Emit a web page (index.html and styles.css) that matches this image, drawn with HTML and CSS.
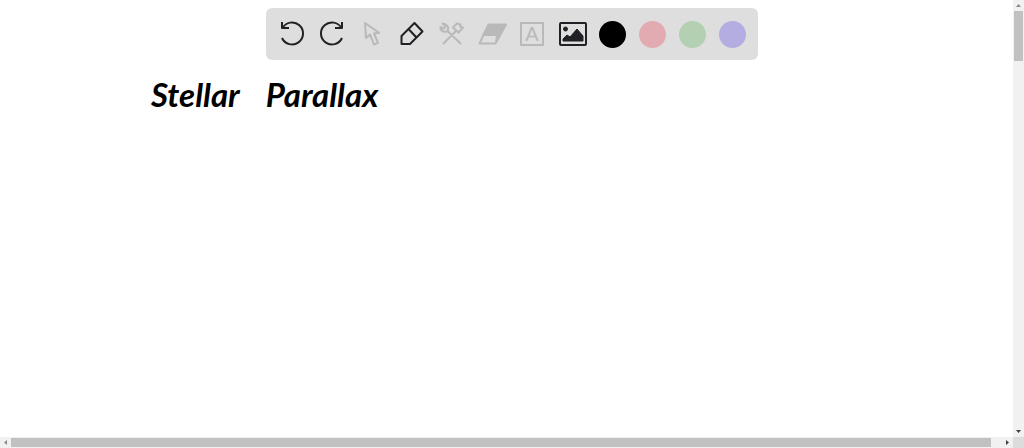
FILE: index.html
```
<!DOCTYPE html>
<html lang="en">
<head>
  <meta charset="utf-8">
  <title>Whiteboard</title>
  <link rel="stylesheet" href="styles.css">
</head>
<body>
  <div class="toolbar-wrap">
    <div class="toolbar" role="toolbar" aria-label="Drawing tools">
      <button class="tool" aria-label="Undo">
        <svg viewBox="0 0 40 52"><path d="M10 14v6h7M10.500 20A11 11 0 1 1 10 30"/></svg>
      </button>
      <button class="tool" aria-label="Redo">
        <svg viewBox="0 0 40 52"><path d="M30 14v6h-7M29.500 20A11 11 0 1 0 30 30"/></svg>
      </button>
      <button class="tool muted" aria-label="Select">
        <svg viewBox="0 0 40 52"><path d="M13 15l1 15 4-3.500 4 10 4-1.700-4-9.300 5-.7z"/></svg>
      </button>
      <button class="tool" aria-label="Pen">
        <svg viewBox="0 0 40 52"><path d="M9.500 36v-8L22.500 15l8 8.500L18 36zM16.500 21l8 8.500"/></svg>
      </button>
      <button class="tool muted" aria-label="Tools">
        <svg viewBox="0 0 40 52"><path d="M8.500 18.500c-.5 4 3 6.500 7 4.500L29 36M15.500 23c2-4-1-7.500-5-7.500l3 3-2 2.500-3-2.500M11 36l13-13M21 19.500l4-4 3.500 1-.5 2 3 1-4.500 5z"/></svg>
      </button>
      <button class="tool muted" aria-label="Eraser">
        <svg viewBox="0 0 40 52"><path d="M16.500 16.500H34L23.500 35.500H7.500z"/><path class="solid" d="M16.500 16.500H34L23.500 35.500l1-8H10.500z"/></svg>
      </button>
      <button class="tool muted" aria-label="Text">
        <svg viewBox="0 0 40 52"><rect x="9" y="15" width="22" height="22"/><text class="letter" x="20" y="33">A</text></svg>
      </button>
      <button class="tool" aria-label="Image">
        <svg viewBox="0 0 40 52"><rect x="8" y="15" width="26" height="22" rx="1"/><circle class="solid" cx="13.500" cy="21" r="2"/><path class="solid" d="M11 33v-2l4-4 3 2 7-8 6 7v5z"/></svg>
      </button>
      <input class="swatch black" type="radio" name="color" aria-label="Black" checked>
      <input class="swatch red" type="radio" name="color" aria-label="Red">
      <input class="swatch green" type="radio" name="color" aria-label="Green">
      <input class="swatch purple" type="radio" name="color" aria-label="Purple">
    </div>
  </div>

  <main class="board">
    <h1 class="ink"><span>Stellar</span> <span>Parallax</span></h1>
  </main>

  <div class="scrollbar vertical">
    <button class="arrow" aria-label="Scroll up"><svg viewBox="0 0 11 11"><path d="M3 7h5L5.500 4z"/></svg></button>
    <div class="thumb"></div>
    <button class="arrow end" aria-label="Scroll down"><svg viewBox="0 0 11 11"><path d="M3 4h5L5.500 7z"/></svg></button>
  </div>

  <div class="scrollbar horizontal">
    <button class="arrow" aria-label="Scroll left"><svg viewBox="0 0 11 11"><path d="M7 3v5L4 5.500z"/></svg></button>
    <div class="thumb"></div>
    <button class="arrow end" aria-label="Scroll right"><svg viewBox="0 0 11 11"><path d="M4 3v5l3-2.500z"/></svg></button>
  </div>
  <div class="corner"></div>
</body>
</html>
```
FILE: styles.css
```
* {
  box-sizing: border-box;
}

body {
  margin: 0;
  height: 100vh;
  display: grid;
  grid-template-columns: 1fr 11px;
  grid-template-rows: 1fr 11px;
  background: #fff;
  font-family: Lato, sans-serif;
  overflow: hidden;
}

/* Toolbar floats over the board */
.toolbar-wrap {
  position: absolute;
  top: 8px;
  left: 0;
  right: 0;
  display: flex;
  justify-content: center;
  pointer-events: none;
}

.toolbar {
  display: flex;
  align-items: center;
  padding: 0 6px;
  background: #dedede;
  border-radius: 6px;
  pointer-events: auto;
}

.tool {
  width: 40px;
  height: 52px;
  padding: 0;
  border: none;
  background: none;
  color: #202124;
  cursor: pointer;
}

.tool.muted {
  color: #b9b9b9;
}

.tool svg {
  display: block;
  width: 100%;
  height: 100%;
  fill: none;
  stroke: currentColor;
  stroke-width: 2;
  stroke-linejoin: round;
}

.tool .solid {
  fill: currentColor;
  stroke-width: 1;
}

.tool .letter {
  font-size: 20px;
  text-anchor: middle;
  fill: currentColor;
  stroke: none;
}

.swatch {
  appearance: none;
  width: 27px;
  height: 27px;
  margin: 0 6px 0 7px;
  border-radius: 50%;
  cursor: pointer;
}

.black { background: #000; }
.red { background: #e2abb2; }
.green { background: #b3d1b2; }
.purple { background: #b3ade2; }

.board {
  padding: 72px 24px 24px 151px;
  overflow: hidden;
}

.ink {
  display: flex;
  gap: 26px;
  margin: 0;
  color: #000;
  font-size: 33px;
  line-height: 44px;
  font-weight: 700;
  font-style: italic;
}

/* Scrollbars */
.scrollbar {
  display: flex;
  background: #f1f1f1;
}

.vertical {
  flex-direction: column;
}

.arrow {
  flex: none;
  width: 11px;
  height: 11px;
  padding: 0;
  border: none;
  background: none;
}

.arrow svg {
  display: block;
  width: 11px;
  height: 11px;
  fill: #8a8a8a;
}

.arrow.end svg {
  fill: #404040;
}

.thumb {
  background: #c1c1c1;
}

.vertical .thumb {
  height: 50px;
  margin: 0 1px;
}

.vertical .end {
  margin-top: auto;
}

.horizontal .thumb {
  flex: 1;
  margin: 1px 11px 1px 0;
}

.corner {
  background: #dcdcdc;
}
```
